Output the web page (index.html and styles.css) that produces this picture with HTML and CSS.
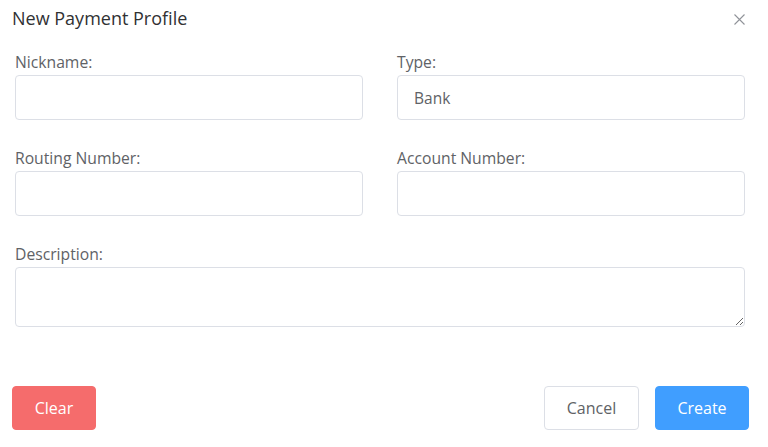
FILE: index.html
```html
<!DOCTYPE html>
<html lang="en">
<head>
<meta charset="utf-8">
<title>New Payment Profile</title>
<link rel="stylesheet" href="styles.css">
</head>
<body>
<div class="dialog">
  <div class="header">
    <span class="title">New Payment Profile</span>
    <button class="close" aria-label="Close">
      <svg width="11" height="11" viewBox="0 0 11 11"><path d="M0.5 0.5 L10.5 10.5 M10.5 0.5 L0.5 10.5" stroke="#909399" stroke-width="1.1" fill="none"/></svg>
    </button>
  </div>
  <form class="form">
    <div class="grid">
      <div class="field">
        <label class="label">Nickname:</label>
        <input class="input" type="text">
      </div>
      <div class="field">
        <label class="label">Type:</label>
        <input class="input" type="text" value="Bank">
      </div>
      <div class="field">
        <label class="label">Routing Number:</label>
        <input class="input" type="text">
      </div>
      <div class="field">
        <label class="label">Account Number:</label>
        <input class="input" type="text">
      </div>
      <div class="field wide">
        <label class="label">Description:</label>
        <textarea class="textarea"></textarea>
      </div>
    </div>
  </form>
  <div class="footer">
    <button class="btn danger">Clear</button>
    <div class="actions">
      <button class="btn plain">Cancel</button>
      <button class="btn primary">Create</button>
    </div>
  </div>
</div>
</body>
</html>
```

FILE: styles.css
```css
* { box-sizing: border-box; }
html, body {
  margin: 0;
  padding: 0;
  background: #ffffff;
  font-family: "Open Sans", "Lato", "Liberation Sans", sans-serif;
}
.dialog {
  width: 768px;
  height: 447px;
  padding: 6px 19px 0 12px;
}
.header {
  display: flex;
  justify-content: space-between;
  align-items: center;
  height: 24px;
}
.title {
  font-size: 18px;
  line-height: 24px;
  color: #303133;
}
.close {
  border: 0;
  background: none;
  padding: 0;
  margin-right: 4px;
  margin-top: 3px;
  width: 11px;
  height: 11px;
  display: flex;
}
.form {
  margin-top: 22px;
  padding-left: 3px;
  padding-right: 4px;
}
.grid {
  display: grid;
  grid-template-columns: 348px 348px;
  column-gap: 34px;
}
.field {
  display: flex;
  flex-direction: column;
  margin-bottom: 28px;
}
.field.wide {
  grid-column: 1 / span 2;
}
.label {
  font-size: 15.7px;
  line-height: 20px;
  color: #606266;
  margin-bottom: 3px;
}
.input {
  height: 45px;
  border: 1px solid #dcdfe6;
  border-radius: 4px;
  padding: 0 16px;
  font-family: inherit;
  font-size: 15.5px;
  color: #606266;
  outline: none;
}
.textarea {
  height: 60px;
  border: 1px solid #dcdfe6;
  border-radius: 4px;
  padding: 5px 15px;
  font-family: inherit;
  font-size: 15px;
  color: #606266;
  resize: vertical;
  outline: none;
}
.footer {
  display: flex;
  justify-content: space-between;
  margin-top: 31px;
}
.actions {
  display: flex;
  gap: 16px;
}
.btn {
  height: 44px;
  border-radius: 4px;
  font-family: inherit;
  font-size: 16px;
  padding: 0;
  border: 1px solid transparent;
}
.danger {
  width: 84px;
  background: #f56c6c;
  border-color: #f56c6c;
  color: #ffffff;
}
.plain {
  width: 95px;
  background: #ffffff;
  border-color: #dcdfe6;
  color: #606266;
}
.primary {
  width: 94px;
  background: #409eff;
  border-color: #409eff;
  color: #ffffff;
}
```
